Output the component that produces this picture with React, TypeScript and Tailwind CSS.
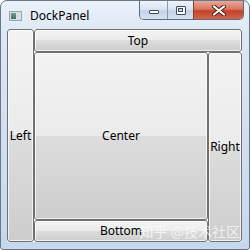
import React from "react";

const btn =
  "flex items-center justify-center border border-[#707070] rounded-[3px] bg-[linear-gradient(#f3f3f3_0%,#ebebeb_50%,#dddddd_50%,#cdcdcd_100%)] shadow-[inset_0_0_0_1px_rgba(255,255,255,0.7)] text-[12px] text-black";

function CaptionButtons() {
  return (
    <div className="flex h-[19px] rounded-b-[5px] border border-t-0 border-[#5a6b80] overflow-hidden">
      <div className="flex w-[28px] items-center justify-center border-r border-[#8b9cb2] bg-[linear-gradient(#eef3f9_0%,#dae5f2_45%,#c2d3e7_55%,#d5e2f1_100%)]">
        <div className="mt-[4px] h-[4px] w-[10px] rounded-[1px] border border-[#3d4a5c] bg-white" />
      </div>
      <div className="flex w-[26px] items-center justify-center border-r border-[#8b3a2c] bg-[linear-gradient(#eef3f9_0%,#dae5f2_45%,#c2d3e7_55%,#d5e2f1_100%)]">
        <div className="flex h-[9px] w-[10px] items-center justify-center rounded-[1px] border border-[#3d4a5c] bg-white">
          <div className="h-[4px] w-[5px] border border-[#3d4a5c] bg-[#c9d6e6]" />
        </div>
      </div>
      <div className="flex w-[49px] items-center justify-center bg-[linear-gradient(#e9a99b_0%,#d8765f_45%,#c4412a_55%,#d3664a_100%)]">
        <svg width="14" height="11" viewBox="0 0 14 11">
          <path d="M2 1.5 L12 9.5 M12 1.5 L2 9.5" stroke="#4a1c14" strokeWidth="4" strokeLinecap="round" />
          <path d="M2 1.5 L12 9.5 M12 1.5 L2 9.5" stroke="#ffffff" strokeWidth="2.2" strokeLinecap="round" />
        </svg>
      </div>
    </div>
  );
}

export default function App() {
  return (
    <div className="h-[250px] w-[250px] bg-white" style={{ fontFamily: '"Noto Sans", "DejaVu Sans", sans-serif' }}>
      <div className="flex h-full w-full flex-col rounded-t-[7px] rounded-b-[3px] border border-[#6b7788] bg-[linear-gradient(#eaf1f9_0%,#dbe7f4_15%,#cfdff0_60%,#c5d8ec_100%)] pl-[6px] pr-[7px] pb-[7px]">
        <div className="flex h-[28px] shrink-0 items-start">
          <div className="flex items-center gap-[8px] pl-[2px] pt-[8px]">
            <div className="flex h-[10px] w-[13px] border border-[#9aa4ae] bg-[#d9dee3]">
              <div className="m-[1px] w-[5px] bg-[linear-gradient(#6f9c8e,#3f6f64)]" />
            </div>
            <span className="text-[12px] leading-[14px] text-black">DockPanel</span>
          </div>
          <div className="ml-auto mr-[-2px]">
            <CaptionButtons />
          </div>
        </div>
        <div className="relative flex flex-1 bg-white">
          <div className={`${btn} w-[27px]`}>Left</div>
          <div className="flex flex-1 flex-col">
            <div className={`${btn} h-[23px]`}>Top</div>
            <div className="flex flex-1">
              <div className="flex flex-1 flex-col">
                <div className={`${btn} flex-1`}>Center</div>
                <div className={`${btn} h-[22px]`}>Bottom</div>
              </div>
              <div className={`${btn} w-[34px]`}>Right</div>
            </div>
          </div>
          <div className="absolute bottom-[2px] right-[2px] text-[14px] leading-[18px] text-white/70" style={{ fontFamily: '"Noto Sans CJK SC", sans-serif' }}>
            知乎 @技术社区
          </div>
        </div>
      </div>
    </div>
  );
}
